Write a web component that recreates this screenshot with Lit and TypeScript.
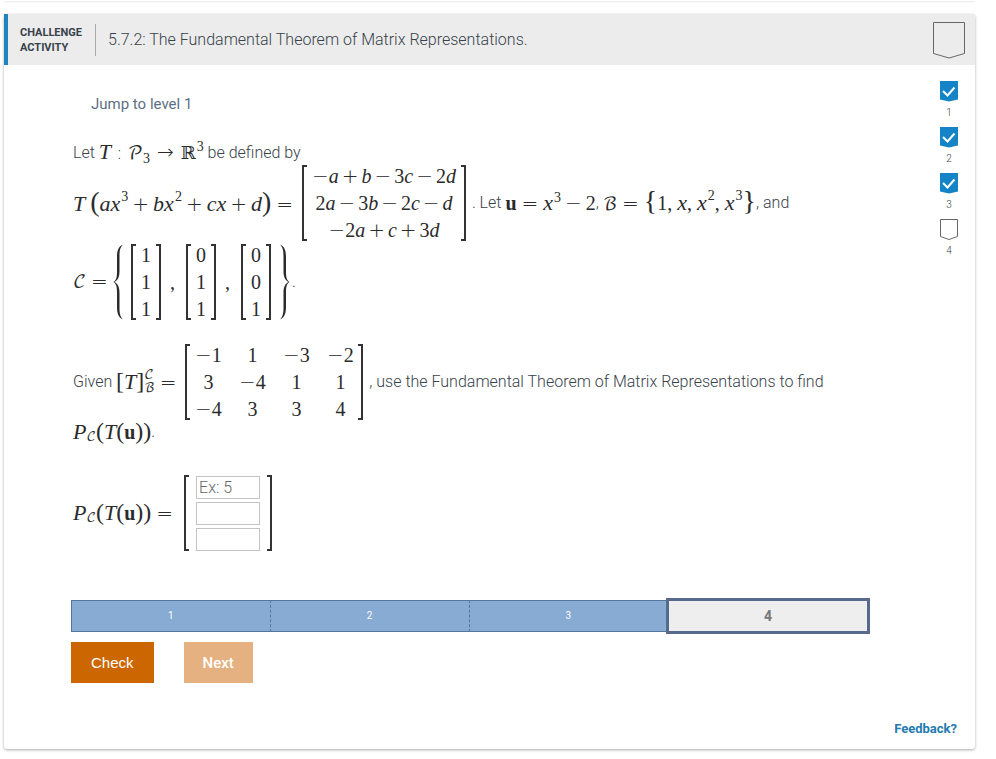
import { LitElement, html, css, svg } from "lit";
import { customElement, property } from "lit/decorators.js";

const v = (s: string) => html`<i>${s}</i>`;
const n = (s: string) => html`<span>${s}</span>`;
const bin = (s: string) => html`<span class="op bin">${s}</span>`;
const rel = (s: string) => html`<span class="op rel">${s}</span>`;
const map = (s: string) => html`<span class="op map">${s}</span>`;
const neg = () => html`<span class="op">−</span>`;
const cal = (s: string) => html`<span class="cal">${s}</span>`;
const vec = (s: string) => html`<b>${s}</b>`;
const comma = () => html`<span class="comma">,</span>`;
const par = (s: string) => html`<span class="par">${s}</span>`;
const big = (s: string) => html`<span class="big">${s}</span>`;
const sup = (s: string) => html`<sup>${s}</sup>`;
const sub = (s: unknown) => html`<sub>${s}</sub>`;
const num = (s: string) => (s[0] === "-" ? html`${neg()}${s.slice(1)}` : s);

const matrix = (rows: unknown[][], kind = "") => html`
  <span class="matrix ${kind}">
    ${rows.map((r) => html`<span class="row">${r.map((c) => html`<span class="cell">${c}</span>`)}</span>`)}
  </span>
`;

const brace = (flip: boolean) => html`
  <svg class="brace ${flip ? "flip" : ""}" viewBox="0 0 11 76" aria-hidden="true">
    ${svg`<path d="M10 .5C6.500 4 6.500 8 6.500 14V27C6.500 33 5 36 1.500 38C5 40 6.500 43 6.500 49V62C6.500 68 6.500 72 10 75.500C4.500 73 4 68 4 62V49C4 43 3.500 40 .5 38C3.500 36 4 33 4 27V14C4 8 4.500 3 10 .5Z"/>`}
  </svg>
`;

const coordinate = () => html`${v("P")}${sub(cal("𝒞"))}${par("(")}${v("T")}${par("(")}${vec("u")}${par("))")}`;

@customElement("level-badge")
class LevelBadge extends LitElement {
  @property({ type: Boolean }) done = false;

  static styles = css`
    :host { display: block; width: 18px; height: 21px; }
    svg { display: block; width: 100%; height: 100%; }
    .full { fill: #1484c6; }
    .tick { fill: none; stroke: #fff; stroke-width: 2; }
    .empty { fill: #fff; stroke: #666; stroke-width: 1; }
  `;

  render() {
    return html`<svg viewBox="0 0 18 21" role="img" aria-label=${this.done ? "Complete" : "Incomplete"}>
      ${this.done
        ? svg`<path class="full" d="M0 0H18V18.500L9 20.500L0 18.500Z"/><path class="tick" d="M3 10L7.500 14.500L14.500 6.500"/>`
        : svg`<path class="empty" d="M.5 .5H17.500V17.500L9 20.500L.5 17.500Z"/>`}
    </svg>`;
  }
}

@customElement("app-root")
class AppRoot extends LitElement {
  static styles = css`
    :host {
      display: block;
      font: 300 16px/24px Roboto, sans-serif;
      color: #37424a;
    }
    .previous { height: 1px; margin: 0 21px 0 4px; box-shadow: 0 1px 2px #ddd; }
    .card {
      display: flex;
      flex-direction: column;
      margin: 13px 21px 8px 4px;
      background: #fff;
      border-radius: 3px;
      box-shadow: 0 1px 3px #aaa;
    }
    header {
      display: flex;
      align-items: center;
      height: 51px;
      padding-right: 9px;
      background: #ececec;
      border-left: 4px solid #1f83bd;
    }
    .kind {
      width: 64px;
      margin-left: 12px;
      padding-right: 11px;
      font-size: 11px;
      font-weight: 700;
      line-height: 15px;
    }
    h1 {
      flex: 1;
      margin: 0;
      padding-left: 12px;
      border-left: 1px solid #aaa;
      font-size: 16px;
      font-weight: 300;
      line-height: 32px;
    }
    .ribbon { width: 34px; height: 38px; fill: none; stroke: #666; stroke-width: 1; }
    .body { display: flex; padding: 0 17px 0 67px; }
    main { flex: 1; min-width: 0; }
    .jump {
      display: block;
      margin: 27px 20px 0;
      color: #5b7083;
      font-size: 15px;
      font-weight: 400;
      text-decoration: none;
    }
    .levels {
      display: flex;
      flex-direction: column;
      gap: 3px;
      margin: 16px 0 0 70px;
      padding: 0;
      list-style: none;
      font-size: 10px;
      line-height: 22px;
      text-align: center;
    }
    .line { display: flex; align-items: center; padding-left: 2px; white-space: pre; }
    .first { height: 24px; margin-top: 25px; }
    .basis { margin-top: 3px; }
    .given { margin-top: 24px; }
    .find { height: 24px; }
    .answer { margin-top: 31px; }
    .m {
      display: inline-flex;
      align-items: baseline;
      font: 400 20px/24px "Liberation Serif", serif;
      color: #2b2b2b;
    }
    .m i { font-size: 22px; }
    .op {
      font: 200 20px/24px "DejaVu Sans", sans-serif;
    }
    .bin { margin: 0 4px; }
    .matrix .bin { margin: 0 3px; }
    .rel { margin: 0 5px; }
    .map { margin: 0 7px; }
    .cal { font-family: "DejaVu Math TeX Gyre", "DejaVu Sans", serif; font-size: 18px; line-height: 24px; }
    .blackboard { font-family: "DejaVu Serif", serif; }
    .comma { margin-right: 5px; }
    .par { font-size: 24px; line-height: 20px; }
    .big { font-size: 28px; line-height: 24px; }
    .head { margin-right: 5px; }
    sup, sub { font-size: 14px; line-height: 14px; vertical-align: baseline; }
    sup { align-self: flex-start; margin-left: 1px; }
    sub { align-self: flex-end; }
    sub .cal, .scripts .cal { font-size: 13px; line-height: 13px; }
    .scripts { display: inline-flex; flex-direction: column; }
    .matrix {
      position: relative;
      display: inline-grid;
      grid-auto-rows: 27px;
      align-content: center;
      height: 76px;
      box-sizing: border-box;
      margin: 0 2px 0 4px;
      padding: 0 10px;
      font: 400 20px/24px "Liberation Serif", serif;
      color: #2b2b2b;
    }
    .matrix::before, .matrix::after {
      content: "";
      position: absolute;
      top: 0;
      bottom: 0;
      width: 5px;
      box-sizing: border-box;
      border: 2px solid #333;
    }
    .matrix::before { left: 0; border-right: 0; }
    .matrix::after { right: 0; border-left: 0; }
    .row { display: grid; grid-auto-flow: column; align-items: center; height: 27px; }
    .four .row { grid-template-columns: repeat(4, 26px); column-gap: 18px; }
    .cell { display: flex; align-items: baseline; justify-content: center; }
    .fields { grid-auto-rows: 23px; row-gap: 3px; margin-left: 6px; padding: 0 12px; }
    .fields .row { height: 23px; }
    input {
      width: 64px;
      height: 23px;
      box-sizing: border-box;
      padding: 0 2px;
      border: 1px solid #c4c4c4;
      border-radius: 0;
      background: #fff;
      font: 300 16px/20px Roboto, sans-serif;
      color: #37424a;
    }
    input::placeholder { color: #666; opacity: 1; }
    .sep::before, .sep::after { content: ""; width: 7px; }
    .brace { width: 11px; height: 76px; margin: 0 3px 0 0; fill: #2b2b2b; }
    .flip { margin: 0 2px 0 6px; transform: scaleX(-1); }
    .steps {
      display: flex;
      margin: 49px 0 0;
      padding: 0;
      list-style: none;
      height: 32px;
      color: #fff;
      font-size: 10px;
      font-weight: 400;
    }
    .steps li {
      flex: 1;
      display: grid;
      place-items: center;
      box-sizing: border-box;
      background: #87abd2;
      border: solid #53779b;
      border-width: 1px 0;
    }
    .steps li:first-child { border-left-width: 1px; }
    .steps li + li { border-left: 1px dashed #53779b; }
    .steps li.current {
      margin: -2px 0 -2px -1px;
      background: #eee;
      border: 3px solid #566b8b;
      color: #777;
      font-size: 14px;
      font-weight: 700;
    }
    .actions { display: flex; gap: 30px; margin-top: 10px; }
    button {
      height: 41px;
      padding: 0 20px;
      border: 0;
      background: #cc6600;
      color: #fff;
      font: 400 15px/20px "Liberation Sans", sans-serif;
    }
    button:disabled { padding: 0 19px; background: #e6b180; color: #fff; font-family: Roboto, sans-serif; font-weight: 500; }
    .feedback {
      align-self: flex-end;
      margin: 34px 18px 8px 0;
      color: #237bb0;
      font-size: 13px;
      font-weight: 700;
      text-decoration: none;
    }
  `;

  render() {
    return html`
      <div class="previous"></div>
      <section class="card">
        <header>
          <span class="kind">CHALLENGE ACTIVITY</span>
          <h1>5.7.2: The Fundamental Theorem of Matrix Representations.</h1>
          <svg class="ribbon" viewBox="0 0 34 38" aria-hidden="true">
            <path d="M1.500 1.500H32.500V32.500L17 37L1.500 32.500Z" />
          </svg>
        </header>
        <div class="body">
          <main>
            <a class="jump" href="#level-1">Jump to level 1</a>
            <div class="line first"><span>Let </span><span class="m">${v("T")}${rel(":")}${cal("𝒫")}${sub("3")}${map("→")}<span class="cal blackboard">ℝ</span>${sup("3")}</span><span> be defined by</span></div>
            <div class="line"><span class="m"><i class="head">T</i>${big("(")}${v("ax")}${sup("3")}${bin("+")}${v("bx")}${sup("2")}${bin("+")}${v("cx")}${bin("+")}${v("d")}${big(")")}${rel("=")}</span>${matrix([
              [html`${neg()}<em>a</em>${bin("+")}<em>b</em>${bin("−")}${n("3")}<em>c</em>${bin("−")}${n("2")}<em>d</em>`],
              [html`${n("2")}<em>a</em>${bin("−")}${n("3")}<em>b</em>${bin("−")}${n("2")}<em>c</em>${bin("−")}<em>d</em>`],
              [html`${neg()}${n("2")}<em>a</em>${bin("+")}<em>c</em>${bin("+")}${n("3")}<em>d</em>`],
            ])}<span> . Let </span><span class="m">${vec("u")}${rel("=")}${v("x")}${sup("3")}${bin("−")}${n("2")}</span><span>, </span><span class="m">${cal("ℬ")}${rel("=")}${big("{")}${n("1")}${comma()}${v("x")}${comma()}${v("x")}${sup("2")}${comma()}${v("x")}${sup("3")}${big("}")}</span><span>, and</span></div>
            <div class="line basis"><span class="m">${cal("𝒞")}${rel("=")}</span>${brace(false)}${matrix([["1"], ["1"], ["1"]])}<span class="m sep">,</span>${matrix([["0"], ["1"], ["1"]])}<span class="m sep">,</span>${matrix([["0"], ["0"], ["1"]])}${brace(true)}<span>.</span></div>
            <div class="line given"><span>Given </span><span class="m">${par("[")}${v("T")}${par("]")}</span><span class="m scripts">${cal("𝒞")}${cal("ℬ")}</span><span class="m">${rel("=")}</span>${matrix(
              [
                ["-1", "1", "-3", "-2"],
                ["3", "-4", "1", "1"],
                ["-4", "3", "3", "4"],
              ].map((r) => r.map(num)),
              "four",
            )}<span> , use the Fundamental Theorem of Matrix Representations to find</span></div>
            <div class="line find"><span class="m">${coordinate()}</span><span>.</span></div>
            <div class="line answer"><span class="m">${coordinate()}${rel("=")}</span>${matrix(
              [1, 2, 3].map((i) => [html`<input type="text" aria-label="Entry ${i}" placeholder=${i === 1 ? "Ex: 5" : ""} />`]),
              "fields",
            )}</div>
            <ol class="steps">
              <li>1</li>
              <li>2</li>
              <li>3</li>
              <li class="current" aria-current="step">4</li>
            </ol>
            <div class="actions">
              <button type="button">Check</button>
              <button type="button" disabled>Next</button>
            </div>
          </main>
          <ol class="levels">
            ${[1, 2, 3, 4].map((i) => html`<li><level-badge ?done=${i < 4}></level-badge>${i}</li>`)}
          </ol>
        </div>
        <a class="feedback" href="#feedback">Feedback?</a>
      </section>
    `;
  }
}
